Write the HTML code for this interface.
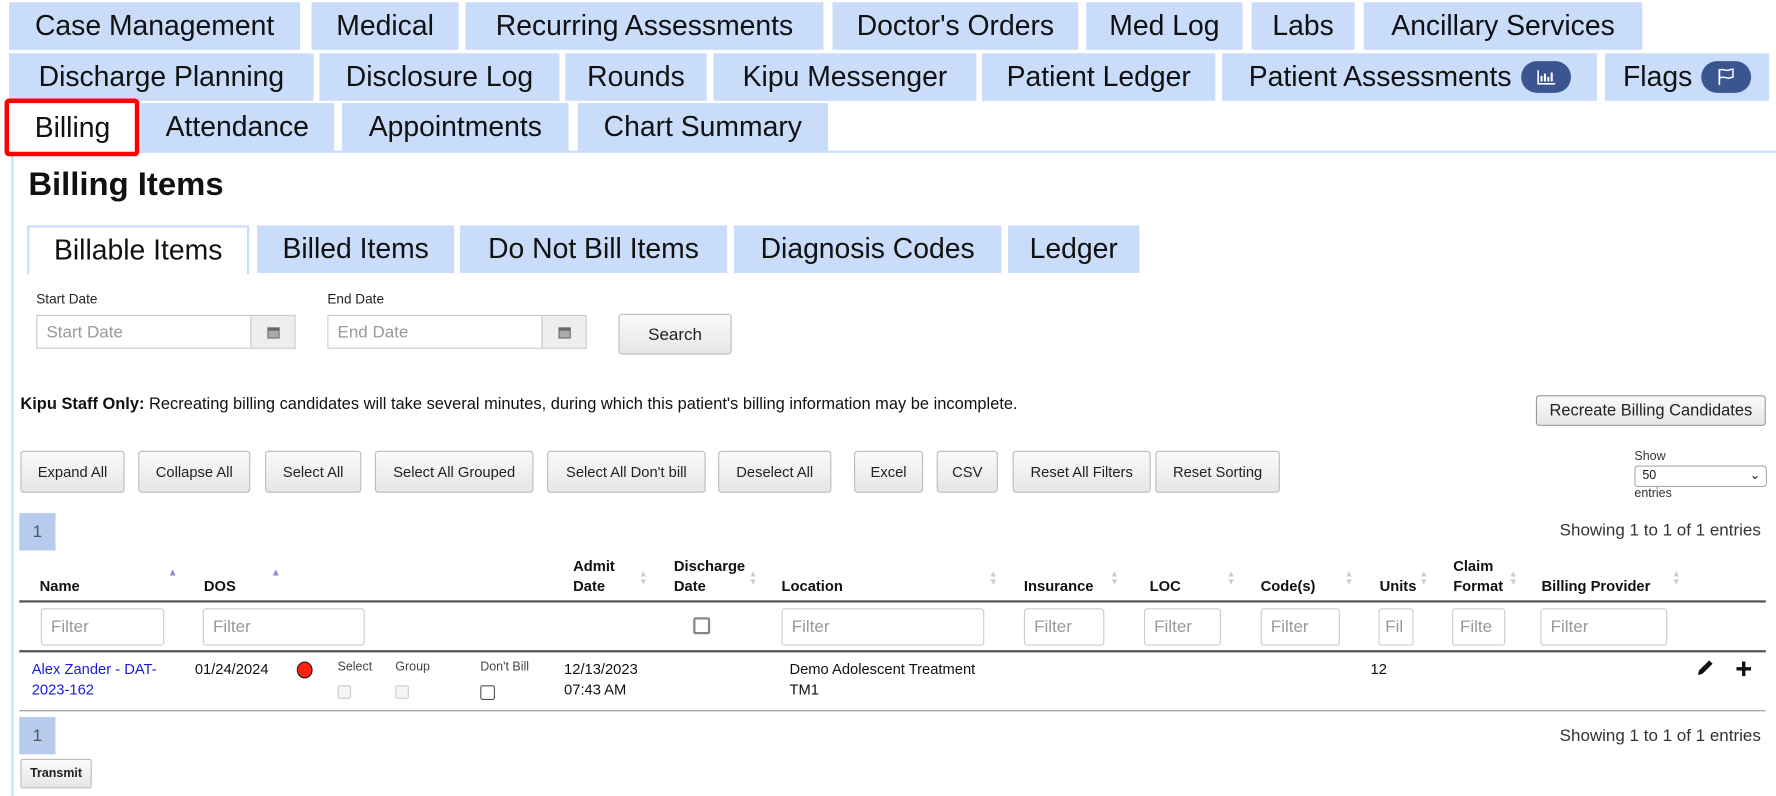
<!DOCTYPE html>
<html><head><meta charset="utf-8"><style>
*{box-sizing:border-box;margin:0;padding:0}
body{width:1776px;height:790px;background:#fff;font-family:"Liberation Sans",Arial,sans-serif;color:#111;position:relative;overflow:hidden}
#w{position:absolute;left:0;top:0;width:1568px;height:698px;transform:scale(1.13265);transform-origin:0 0}
.a{position:absolute}
.t{position:absolute;background:#c9ddfb;font-size:25px;display:flex;align-items:center;justify-content:center;white-space:nowrap;color:#111}
.s{position:absolute;background:#c9ddfb;font-size:25px;display:flex;align-items:center;justify-content:center;white-space:nowrap}
.lbl{position:absolute;font-size:12px;color:#222}
.inp{position:absolute;border:1px solid #ccc;background:#fff;font-size:15px;color:#999;padding-left:8px;display:flex;align-items:center}
.add{position:absolute;border:1px solid #ccc;background:#eee;display:flex;align-items:center;justify-content:center}
.btn{position:absolute;border:1px solid #bbb;border-radius:3px;background:linear-gradient(#fafafa,#e6e6e6);font-size:13px;display:flex;align-items:center;justify-content:center;white-space:nowrap;color:#222}
.th{position:absolute;font-size:13px;font-weight:bold;line-height:18px}
.f{position:absolute;top:537px;height:33px;border:1px solid #ccc;border-radius:3px;font-size:15px;color:#999;padding-left:8px;display:flex;align-items:center;overflow:hidden;white-space:nowrap}
.sa{position:absolute;color:#ccc;font-size:8px;line-height:7px}
.td{position:absolute;font-size:13px;line-height:18px}
.cb{position:absolute;width:12px;height:12px;border:1px solid #ccc;border-radius:2px;background:#f4f4f4}
.badge{display:inline-flex;width:44px;height:28px;border-radius:14px;background:#3b5590;margin-left:8px;align-items:center;justify-content:center}
</style></head><body><div id="w">
<div class="t" style="left:8px;top:2px;width:257px;height:42px">Case Management</div>
<div class="t" style="left:275px;top:2px;width:130px;height:42px">Medical</div>
<div class="t" style="left:411px;top:2px;width:316px;height:42px">Recurring Assessments</div>
<div class="t" style="left:735px;top:2px;width:217px;height:42px">Doctor's Orders</div>
<div class="t" style="left:959px;top:2px;width:138px;height:42px">Med Log</div>
<div class="t" style="left:1105px;top:2px;width:91px;height:42px">Labs</div>
<div class="t" style="left:1204px;top:2px;width:246px;height:42px">Ancillary Services</div>
<div class="t" style="left:8px;top:47px;width:269px;height:42px">Discharge Planning</div>
<div class="t" style="left:282px;top:47px;width:212px;height:42px">Disclosure Log</div>
<div class="t" style="left:499px;top:47px;width:125px;height:42px">Rounds</div>
<div class="t" style="left:630px;top:47px;width:232px;height:42px">Kipu Messenger</div>
<div class="t" style="left:867px;top:47px;width:206px;height:42px">Patient Ledger</div>
<div class="t" style="left:1079px;top:47px;width:331px;height:42px">Patient Assessments<span class="badge"><svg width="18" height="14" viewBox="0 0 18 14"><path d="M2 1v12h15" stroke="#fff" stroke-width="1.4" fill="none"/><path d="M5 6v5M8 4v7M11 7v4M14 3v8" stroke="#fff" stroke-width="1.8"/></svg></span></div>
<div class="t" style="left:1417px;top:47px;width:145px;height:42px">Flags<span class="badge"><svg width="18" height="16" viewBox="0 0 18 16"><path d="M3 1v14" stroke="#fff" stroke-width="1.5"/><path d="M3 2c3-2 5 1 8 0s3-1 4-1v7c-1 0-2 1-4 1s-5-2-8 0z" stroke="#fff" stroke-width="1.3" fill="none"/></svg></span></div>
<div class="a" style="left:10px;top:133px;width:1566px;height:2px;background:#c9ddfb"></div>
<div class="a" style="left:10px;top:133px;width:2px;height:570px;background:#c9ddfb"></div>
<div class="t" style="left:8px;top:91px;width:112px;height:44px;background:#fff">Billing</div>
<div class="a" style="left:4px;top:87px;width:119px;height:51px;border:4px solid #f00;border-radius:4px"></div>
<div class="t" style="left:124px;top:91px;width:171px;height:42px">Attendance</div>
<div class="t" style="left:302px;top:91px;width:200px;height:42px">Appointments</div>
<div class="t" style="left:510px;top:91px;width:221px;height:42px">Chart Summary</div>

<div class="a" style="left:25px;top:147px;font-size:29px;font-weight:bold">Billing Items</div>
<div class="s" style="left:24px;top:199px;width:196px;height:43px;background:#fff;border:2px solid #c9ddfb;border-bottom:none">Billable Items</div>
<div class="s" style="left:227px;top:199px;width:174px;height:42px">Billed Items</div>
<div class="s" style="left:406px;top:199px;width:236px;height:42px">Do Not Bill Items</div>
<div class="s" style="left:648px;top:199px;width:236px;height:42px">Diagnosis Codes</div>
<div class="s" style="left:890px;top:199px;width:116px;height:42px">Ledger</div>

<div class="lbl" style="left:32px;top:257px">Start Date</div>
<div class="inp" style="left:32px;top:278px;width:190px;height:30px">Start Date</div>
<div class="add" style="left:221px;top:278px;width:40px;height:30px"><svg width="11" height="11"><rect x="0" y="1" width="11" height="10" fill="#666"/><rect x="1" y="4" width="9" height="6" fill="#aaa"/></svg></div>
<div class="lbl" style="left:289px;top:257px">End Date</div>
<div class="inp" style="left:289px;top:278px;width:190px;height:30px">End Date</div>
<div class="add" style="left:478px;top:278px;width:40px;height:30px"><svg width="11" height="11"><rect x="0" y="1" width="11" height="10" fill="#666"/><rect x="1" y="4" width="9" height="6" fill="#aaa"/></svg></div>
<div class="btn" style="left:546px;top:277px;width:100px;height:36px;font-size:15px">Search</div>

<div class="a" style="left:18px;top:349px;font-size:14.5px"><b>Kipu Staff Only:</b> Recreating billing candidates will take several minutes, during which this patient's billing information may be incomplete.</div>
<div class="btn" style="left:1356px;top:349px;width:203px;height:27px;font-size:14.5px;border-color:#999">Recreate Billing Candidates</div>

<div class="btn" style="left:18px;top:398px;width:92px;height:37px">Expand All</div>
<div class="btn" style="left:122px;top:398px;width:99px;height:37px">Collapse All</div>
<div class="btn" style="left:234px;top:398px;width:85px;height:37px">Select All</div>
<div class="btn" style="left:331px;top:398px;width:140px;height:37px">Select All Grouped</div>
<div class="btn" style="left:483px;top:398px;width:140px;height:37px">Select All Don't bill</div>
<div class="btn" style="left:634px;top:398px;width:100px;height:37px">Deselect All</div>
<div class="btn" style="left:754px;top:398px;width:61px;height:37px">Excel</div>
<div class="btn" style="left:827px;top:398px;width:54px;height:37px">CSV</div>
<div class="btn" style="left:894px;top:398px;width:122px;height:37px">Reset All Filters</div>
<div class="btn" style="left:1020px;top:398px;width:110px;height:37px">Reset Sorting</div>

<div class="a" style="left:1443px;top:397px;font-size:11px;color:#333">Show</div>
<div class="a" style="left:1443px;top:411px;width:117px;height:19px;border:1px solid #aaa;border-radius:3px;font-size:11px;padding-left:6px;line-height:17px">50<span style="position:absolute;right:5px;top:0">&#8964;</span></div>
<div class="a" style="left:1443px;top:430px;font-size:11px;color:#333">entries</div>

<div class="a" style="left:17px;top:453px;width:32px;height:33px;background:#b7cbee;font-size:15px;color:#555;display:flex;align-items:center;justify-content:center">1</div>
<div class="a" style="left:1377px;top:460px;font-size:15px;color:#333">Showing 1 to 1 of 1 entries</div>

<div class="th" style="left:35px;top:509px">Name</div><div class="a" style="left:148px;top:500px;color:#88d;font-size:9px">&#9650;</div>
<div class="th" style="left:180px;top:509px">DOS</div><div class="a" style="left:239px;top:500px;color:#88d;font-size:9px">&#9650;</div>
<div class="th" style="left:506px;top:491px">Admit<br>Date</div><div class="sa" style="left:564px;top:503px">&#9650;<br>&#9660;</div>
<div class="th" style="left:595px;top:491px">Discharge<br>Date</div><div class="sa" style="left:661px;top:503px">&#9650;<br>&#9660;</div>
<div class="th" style="left:690px;top:509px">Location</div><div class="sa" style="left:873px;top:503px">&#9650;<br>&#9660;</div>
<div class="th" style="left:904px;top:509px">Insurance</div><div class="sa" style="left:980px;top:503px">&#9650;<br>&#9660;</div>
<div class="th" style="left:1015px;top:509px">LOC</div><div class="sa" style="left:1083px;top:503px">&#9650;<br>&#9660;</div>
<div class="th" style="left:1113px;top:509px">Code(s)</div><div class="sa" style="left:1187px;top:503px">&#9650;<br>&#9660;</div>
<div class="th" style="left:1218px;top:509px">Units</div><div class="sa" style="left:1253px;top:503px">&#9650;<br>&#9660;</div>
<div class="th" style="left:1283px;top:491px">Claim<br>Format</div><div class="sa" style="left:1332px;top:503px">&#9650;<br>&#9660;</div>
<div class="th" style="left:1361px;top:509px">Billing Provider</div><div class="sa" style="left:1476px;top:503px">&#9650;<br>&#9660;</div>
<div class="a" style="left:17px;top:530px;width:1542px;height:2px;background:#555"></div>
<div class="f" style="left:36px;width:109px">Filter</div>
<div class="f" style="left:179px;width:143px">Filter</div>
<div class="a" style="left:612px;top:545px;width:15px;height:15px;border:2px solid #888;border-radius:2px"></div>
<div class="f" style="left:690px;width:179px">Filter</div>
<div class="f" style="left:904px;width:71px">Filter</div>
<div class="f" style="left:1010px;width:68px">Filter</div>
<div class="f" style="left:1113px;width:70px">Filter</div>
<div class="f" style="left:1217px;width:31px;padding-left:5px">Fil</div>
<div class="f" style="left:1282px;width:47px;padding-left:6px">Filte</div>
<div class="f" style="left:1360px;width:112px">Filter</div>
<div class="a" style="left:17px;top:574px;width:1542px;height:2px;background:#555"></div>

<div class="td" style="left:28px;top:582px;color:#1a1adb">Alex Zander - DAT-<br>2023-162</div>
<div class="td" style="left:172px;top:582px">01/24/2024</div>
<div class="a" style="left:262px;top:584px;width:14px;height:15px;border-radius:50%;background:#f21;border:1.5px solid #222"></div>
<div class="td" style="left:298px;top:580px;font-size:11px;color:#444">Select</div>
<div class="td" style="left:349px;top:580px;font-size:11px;color:#444">Group</div>
<div class="td" style="left:424px;top:580px;font-size:11px;color:#444">Don't Bill</div>
<div class="cb" style="left:298px;top:605px"></div>
<div class="cb" style="left:349px;top:605px"></div>
<div class="cb" style="left:424px;top:605px;border:1.5px solid #555;background:#fff;width:13px;height:13px"></div>
<div class="td" style="left:498px;top:582px">12/13/2023<br>07:43 AM</div>
<div class="td" style="left:697px;top:582px">Demo Adolescent Treatment<br>TM1</div>
<div class="td" style="left:1210px;top:582px">12</div>
<svg class="a" style="left:1497px;top:582px" width="18" height="16" viewBox="0 0 18 16"><path d="M2 14l1-4 9-9 3 3-9 9z" fill="#111"/></svg>
<svg class="a" style="left:1533px;top:584px" width="13" height="13" viewBox="0 0 13 13"><path d="M6.5 0v13M0 6.5h13" stroke="#111" stroke-width="3"/></svg>
<div class="a" style="left:17px;top:627px;width:1542px;height:1px;background:#999"></div>

<div class="a" style="left:17px;top:633px;width:32px;height:33px;background:#b7cbee;font-size:15px;color:#555;display:flex;align-items:center;justify-content:center">1</div>
<div class="a" style="left:1377px;top:641px;font-size:15px;color:#333">Showing 1 to 1 of 1 entries</div>
<div class="btn" style="left:18px;top:670px;width:63px;height:26px;font-size:11px;font-weight:bold;border-radius:2px">Transmit</div>
</div></body></html>
